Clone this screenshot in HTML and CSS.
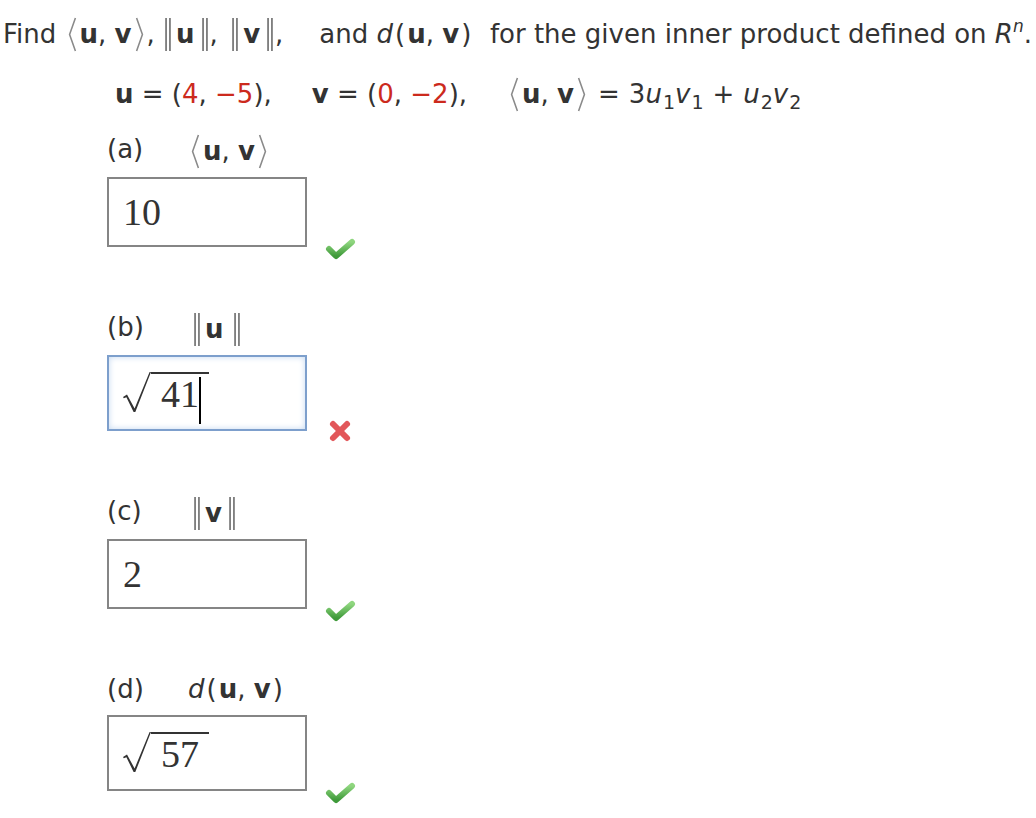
FILE: index.html
```html
<!DOCTYPE html>
<html>
<head>
<meta charset="utf-8">
<link rel="stylesheet" href="styles.css">
</head>
<body>
<div class="page">
  <div class="q">Find <svg class="ang" viewBox="0 0 10 36"><polyline points="8,1 2,18 8,35"/></svg><b>u</b>, <b>v</b><svg class="ang" viewBox="0 0 10 36"><polyline points="2,1 8,18 2,35"/></svg>, <svg class="bars bl" viewBox="0 0 10 36"><line x1="3" y1="1" x2="3" y2="35"/><line x1="7" y1="1" x2="7" y2="35"/></svg><b>u</b><svg class="bars br" viewBox="0 0 10 36"><line x1="3" y1="1" x2="3" y2="35"/><line x1="7" y1="1" x2="7" y2="35"/></svg>, <svg class="bars bl second" viewBox="0 0 10 36"><line x1="3" y1="1" x2="3" y2="35"/><line x1="7" y1="1" x2="7" y2="35"/></svg><b>v</b><svg class="bars br" viewBox="0 0 10 36"><line x1="3" y1="1" x2="3" y2="35"/><line x1="7" y1="1" x2="7" y2="35"/></svg>,<span class="wsp"></span>and <i>d</i><span class="par">(</span><b>u</b>, <b>v</b><span class="par">)</span>&nbsp; for the given inner product defined on <i>R</i><sup class="sup"><i>n</i></sup>.</div>

  <div class="given"><b>u</b> = (<span class="red">4</span>, <span class="red">−5</span>),<span class="sp"></span><b>v</b> = (<span class="red">0</span>, <span class="red">−2</span>),<span class="sp"></span><svg class="ang" viewBox="0 0 10 36"><polyline points="8,1 2,18 8,35"/></svg><b>u</b>, <b>v</b><svg class="ang" viewBox="0 0 10 36"><polyline points="2,1 8,18 2,35"/></svg><span class="op">=</span>3<i>u</i><sub>1</sub><i>v</i><sub>1</sub><span class="op">+</span><i>u</i><sub>2</sub><i>v</i><sub>2</sub></div>

  <div class="part first">
    <div class="label"><span class="tag">(a)</span><span class="math"><svg class="ang" viewBox="0 0 10 36"><polyline points="8,1 2,18 8,35"/></svg><b>u</b>, <b>v</b><svg class="ang" viewBox="0 0 10 36"><polyline points="2,1 8,18 2,35"/></svg></span></div>
    <div class="row">
      <div class="box"><span class="ans">10</span></div>
      <svg class="icon" viewBox="0 0 32 24"><defs><linearGradient id="g1" x1="0" y1="0" x2="0" y2="1"><stop offset="0" stop-color="#8fd67f"/><stop offset="1" stop-color="#3f9a3a"/></linearGradient></defs><polyline points="5,12 12,19 28,5" fill="none" stroke="url(#g1)" stroke-width="6" stroke-linecap="round" stroke-linejoin="round"/></svg>
    </div>
  </div>

  <div class="part">
    <div class="label"><span class="tag">(b)</span><span class="math"><svg class="bars bl first-bar" viewBox="0 0 10 36"><line x1="3" y1="1" x2="3" y2="35"/><line x1="7" y1="1" x2="7" y2="35"/></svg><b>u</b><svg class="bars br wide" viewBox="0 0 10 36"><line x1="3" y1="1" x2="3" y2="35"/><line x1="7" y1="1" x2="7" y2="35"/></svg></span></div>
    <div class="row">
      <div class="box tall focus">
        <span class="sqrt"><svg class="radical" viewBox="0 0 28 40"><polygon points="0,25 4,22.5 11.6,36.5 26.6,0 28,0 12.3,40 10.6,40 3.4,25.2 0.8,26.2"/></svg><span class="radicand">41<span class="cursor"></span></span></span>
      </div>
      <svg class="icon xicon" viewBox="0 0 32 28"><line x1="9" y1="7" x2="23" y2="21" stroke="#e2575a" stroke-width="6" stroke-linecap="round"/><line x1="23" y1="7" x2="9" y2="21" stroke="#e2575a" stroke-width="6" stroke-linecap="round"/></svg>
    </div>
  </div>

  <div class="part">
    <div class="label"><span class="tag">(c)</span><span class="math"><svg class="bars bl first-bar" viewBox="0 0 10 36"><line x1="3" y1="1" x2="3" y2="35"/><line x1="7" y1="1" x2="7" y2="35"/></svg><b>v</b><svg class="bars br" viewBox="0 0 10 36"><line x1="3" y1="1" x2="3" y2="35"/><line x1="7" y1="1" x2="7" y2="35"/></svg></span></div>
    <div class="row">
      <div class="box"><span class="ans">2</span></div>
      <svg class="icon" viewBox="0 0 32 24"><defs><linearGradient id="g2" x1="0" y1="0" x2="0" y2="1"><stop offset="0" stop-color="#8fd67f"/><stop offset="1" stop-color="#3f9a3a"/></linearGradient></defs><polyline points="5,12 12,19 28,5" fill="none" stroke="url(#g2)" stroke-width="6" stroke-linecap="round" stroke-linejoin="round"/></svg>
    </div>
  </div>

  <div class="part last">
    <div class="label"><span class="tag">(d)</span><span class="math"><i>d</i><span class="par">(</span><b>u</b>, <b>v</b><span class="par">)</span></span></div>
    <div class="row">
      <div class="box tall">
        <span class="sqrt"><svg class="radical" viewBox="0 0 28 40"><polygon points="0,25 4,22.5 11.6,36.5 26.6,0 28,0 12.3,40 10.6,40 3.4,25.2 0.8,26.2"/></svg><span class="radicand">57</span></span>
      </div>
      <svg class="icon" viewBox="0 0 32 24"><defs><linearGradient id="g3" x1="0" y1="0" x2="0" y2="1"><stop offset="0" stop-color="#8fd67f"/><stop offset="1" stop-color="#3f9a3a"/></linearGradient></defs><polyline points="5,12 12,19 28,5" fill="none" stroke="url(#g3)" stroke-width="6" stroke-linecap="round" stroke-linejoin="round"/></svg>
    </div>
  </div>
</div>
</body>
</html>
```

FILE: styles.css
```css
html, body {
  margin: 0;
  padding: 0;
  background: #ffffff;
}
.page {
  font-family: "DejaVu Sans", Verdana, sans-serif;
  font-size: 26px;
  color: #333333;
  padding: 17px 0 40px 3px;
}
.q, .given, .label {
  line-height: 30px;
  height: 30px;
  white-space: nowrap;
}
b {
  font-weight: bold;
}
i {
  font-style: italic;
}
.sup {
  font-size: 17px;
  vertical-align: 11px;
  line-height: 0;
}
sub {
  font-size: 19px;
  vertical-align: -6px;
  line-height: 0;
  margin-left: 1px;
}
.red {
  color: #cc2a1d;
}
.sp {
  display: inline-block;
  width: 40px;
}
.wsp {
  display: inline-block;
  width: 36px;
}
.par {
  margin: 0 2px;
}
.op {
  margin: 0 9px 0 9px;
}
.ang {
  display: inline-block;
  width: 11px;
  height: 35px;
  vertical-align: -9px;
  fill: none;
  stroke: #8a8a8a;
  stroke-width: 1.6;
  margin: 0 2px;
}
.bars {
  display: inline-block;
  width: 10px;
  height: 35px;
  vertical-align: -9px;
  stroke: #666666;
  stroke-width: 1.6;
}
.bars.bl {
  margin-right: 3px;
}
.bars.br {
  margin-left: 5px;
}
.bars.second {
  margin-left: 4px;
}
.bars.first-bar {
  margin-left: 4px;
}
.bars.wide {
  margin-left: 8px;
}
.given {
  margin-top: 30px;
  padding-left: 112px;
}
.part {
  padding-left: 104px;
  margin-top: 65px;
}
.part.first {
  margin-top: 27px;
}
.label {
  display: flex;
}
.tag {
  width: 81px;
}
.row {
  display: flex;
  align-items: flex-end;
  margin-top: 13px;
}
.last .row {
  margin-top: 11px;
}
.box {
  box-sizing: border-box;
  width: 200px;
  height: 70px;
  border: 2px solid #858585;
  display: flex;
  align-items: center;
  padding-left: 14px;
  font-family: "Liberation Serif", "DejaVu Serif", serif;
  font-size: 38px;
  color: #333333;
}
.box.tall {
  height: 76px;
  align-items: flex-start;
  padding-top: 15px;
}
.box.focus {
  border-color: #7d9fcc;
  box-shadow: inset 0 0 6px #c4d8f0;
}
.sqrt {
  display: flex;
  align-items: flex-start;
}
.radical {
  display: block;
  width: 28px;
  height: 40px;
  fill: #333333;
}
.radicand {
  position: relative;
  border-top: 2px solid #333333;
  padding: 1px 10px 0 10px;
  line-height: 38px;
}
.cursor {
  position: absolute;
  right: 8px;
  top: 3px;
  width: 2px;
  height: 47px;
  background: #000000;
}
.icon {
  width: 32px;
  height: 24px;
  margin-left: 17px;
  margin-bottom: -14px;
}
.xicon {
  height: 28px;
}
```
